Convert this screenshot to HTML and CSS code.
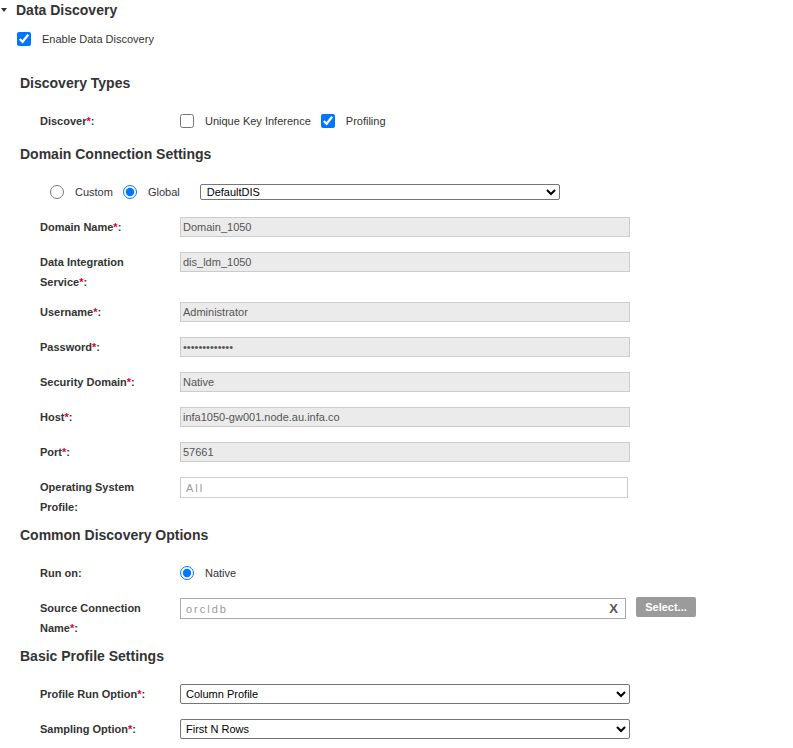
FILE: index.html
```html
<!DOCTYPE html>
<html lang="en">
<head>
  <meta charset="utf-8">
  <title>Data Discovery</title>
  <link rel="stylesheet" href="styles.css">
</head>
<body>
  <div class="section">
    <div class="section_title"><span class="caret"></span>Data Discovery</div>
    <label class="enable_row">
      <input type="checkbox" checked>
      <span>Enable Data Discovery</span>
    </label>

    <!-- Discovery Types -->
    <div class="group_title first">Discovery Types</div>
    <div class="field_row">
      <label class="field_label">Discover<span class="req">*</span>:</label>
      <div class="choices">
        <label class="choice"><input type="checkbox"><span>Unique Key Inference</span></label>
        <label class="choice"><input type="checkbox" checked><span>Profiling</span></label>
      </div>
    </div>

    <!-- Domain Connection Settings -->
    <div class="group_title">Domain Connection Settings</div>
    <div class="field_row scope_row">
      <label class="choice"><input type="radio" name="scope"><span>Custom</span></label>
      <label class="choice"><input type="radio" name="scope" checked><span>Global</span></label>
      <select class="select_box small">
        <option>DefaultDIS</option>
      </select>
    </div>
    <div class="field_row">
      <label class="field_label">Domain Name<span class="req">*</span>:</label>
      <input class="text_input locked" type="text" value="Domain_1050" readonly>
    </div>
    <div class="field_row">
      <label class="field_label">Data Integration Service<span class="req">*</span>:</label>
      <input class="text_input locked" type="text" value="dis_ldm_1050" readonly>
    </div>
    <div class="field_row">
      <label class="field_label">Username<span class="req">*</span>:</label>
      <input class="text_input locked" type="text" value="Administrator" readonly>
    </div>
    <div class="field_row">
      <label class="field_label">Password<span class="req">*</span>:</label>
      <input class="text_input locked" type="password" value="Administrator" readonly>
    </div>
    <div class="field_row">
      <label class="field_label">Security Domain<span class="req">*</span>:</label>
      <input class="text_input locked" type="text" value="Native" readonly>
    </div>
    <div class="field_row">
      <label class="field_label">Host<span class="req">*</span>:</label>
      <input class="text_input locked" type="text" value="infa1050-gw001.node.au.infa.co" readonly>
    </div>
    <div class="field_row">
      <label class="field_label">Port<span class="req">*</span>:</label>
      <input class="text_input locked" type="text" value="57661" readonly>
    </div>
    <div class="field_row">
      <label class="field_label">Operating System Profile:</label>
      <input class="text_input spaced os_input" type="text" placeholder="All">
    </div>

    <!-- Common Discovery Options -->
    <div class="group_title">Common Discovery Options</div>
    <div class="field_row">
      <label class="field_label">Run on:</label>
      <label class="choice"><input type="radio" name="run_on" checked><span>Native</span></label>
    </div>
    <div class="field_row">
      <label class="field_label">Source Connection Name<span class="req">*</span>:</label>
      <div class="clear_wrap">
        <input class="text_input spaced source_input" type="text" placeholder="orcldb">
        <span class="clear_btn">X</span>
      </div>
      <button class="select_btn" type="button">Select...</button>
    </div>

    <!-- Basic Profile Settings -->
    <div class="group_title">Basic Profile Settings</div>
    <div class="field_row">
      <label class="field_label">Profile Run Option<span class="req">*</span>:</label>
      <select class="select_box wide">
        <option>Column Profile</option>
      </select>
    </div>
    <div class="field_row">
      <label class="field_label">Sampling Option<span class="req">*</span>:</label>
      <select class="select_box wide">
        <option>First N Rows</option>
      </select>
    </div>
  </div>
</body>
</html>
```

FILE: styles.css
```css
*, ::before, ::after {
  box-sizing: border-box;
}

body {
  margin: 0;
  font-family: "Liberation Sans", Arial, sans-serif;
  font-size: 11px;
  color: #333;
  background: white;
}

.section_title {
  display: flex;
  align-items: center;
  gap: 9px;
  padding-top: 1px;
  line-height: 18px;
  font-size: 14px; font-weight: bold;
}
.caret {
  width: 0; height: 0;
  margin-left: 1px;
  border-style: solid;
  border-width: 4px 3.5px 0 3.5px;
  border-color: #333 transparent transparent transparent;
}

.enable_row {
  display: flex;
  align-items: center;
  gap: 11px;
  margin: 13px 0 0 17px;
  width: max-content;
  line-height: 14px;
}

input[type='checkbox'], input[type='radio'] {
  width: 14px; height: 14px;
  margin: 0;
  accent-color: #0075ff;
  flex: none;
}

/* section headings */
.group_title {
  padding-left: 20px;
  margin: 0 0 20px 0;
  line-height: 16px;
  font-size: 14px; font-weight: bold;
}
.group_title.first {
  margin-top: 29px;
}

/* one label + control per row */
.field_row {
  display: flex;
  align-items: flex-start;
  min-height: 25px;
  margin-bottom: 10px;
  padding-left: 40px;
  line-height: 20px;
}
.field_label {
  width: 120px;
  margin-right: 20px;
  font-weight: bold;
  flex: none;
}
.req {
  color: #e0002b;
}

.choices {
  display: flex;
  gap: 10px;
}
.choice {
  display: flex;
  align-items: center;
  gap: 11px;
  height: 20px;
}
.scope_row {
  padding-left: 50px;
}
.scope_row .choice {
  margin-right: 10px;
}
.scope_row .choice + .choice {
  margin-right: 20px;
}

.text_input {
  width: 450px; height: 20px;
  margin: 0;
  padding: 0 2px;
  border: 1px solid #ccc;
  font: 11px "Liberation Sans", Arial, sans-serif;
  color: #555;
  outline: 0;
}
.text_input.locked {
  background: #ebebeb;
}
.text_input.spaced {
  height: 21px;
  padding: 0 5px;
  letter-spacing: 2px;
  background: white;
}
.text_input.spaced::placeholder {
  color: #999;
}
.os_input {
  width: 448px;
}
.source_input {
  width: 446px;
  border-color: #aaa;
}

.clear_wrap {
  position: relative;
}
.clear_btn {
  position: absolute;
  right: 8px; top: 0;
  line-height: 21px;
  font-size: 13px; font-weight: bold;
  color: #555;
}
.select_btn {
  width: 60px; height: 20px;
  margin: -1px 0 0 10px;
  padding: 0;
  border: 0; border-radius: 2px;
  background: #9b9b9b;
  color: white;
  font: bold 11px "Liberation Sans", Arial, sans-serif;
}

.select_box {
  margin: 0;
  padding: 0 1px;
  border: 1px solid #767676; border-radius: 2px;
  background: white;
  color: black;
  font: 11px "Liberation Sans", Arial, sans-serif;
}
.select_box.small {
  width: 360px; height: 16px;
  margin-top: 2px;
  padding-left: 2px;
}
.select_box.wide {
  width: 450px; height: 20px;
}
```
